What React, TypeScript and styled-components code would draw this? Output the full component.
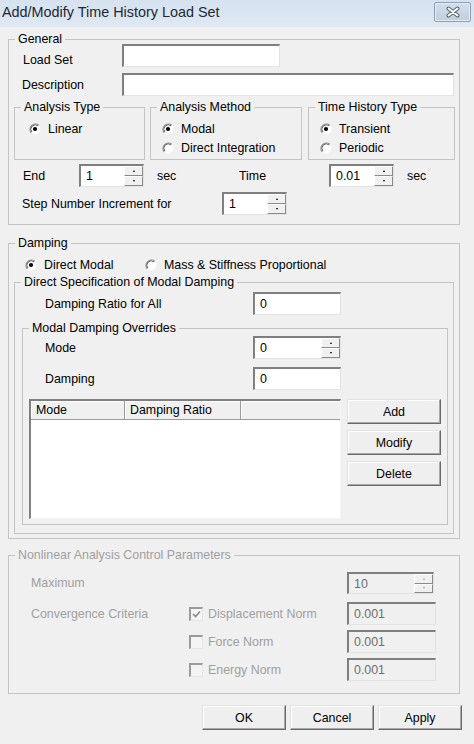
import React from 'react';
import styled, { createGlobalStyle } from 'styled-components';

const GlobalStyle = createGlobalStyle`
  html, body {
    margin: 0;
    padding: 0;
    background: #f0f0f0;
  }
  body {
    font-family: 'Liberation Sans', Arial, sans-serif;
    font-size: 12.4px;
    color: #000;
  }
`;

const Dialog = styled.div`
  width: 474px;
  height: 744px;
  display: flex;
  flex-direction: column;
  background: #f0f0f0;
  overflow: hidden;
`;

const TitleBar = styled.div`
  height: 27px;
  flex: none;
  display: flex;
  align-items: flex-start;
  justify-content: space-between;
  padding: 0 3px 0 2px;
  background: linear-gradient(#d6e2ef, #dfe8f3);
`;

const Title = styled.div`
  margin-top: 4px;
  font-size: 14.4px;
  line-height: 17px;
  color: #1e2833;
`;

const CloseButton = styled.div`
  width: 37px;
  height: 20px;
  margin-top: 2px;
  box-sizing: border-box;
  display: flex;
  align-items: center;
  justify-content: center;
  border: 1px solid #8e9fb5;
  border-radius: 2px;
  background: linear-gradient(#d3deea, #c1cede);
  box-shadow: inset 0 0 0 1px #e4ebf3;
`;

const Body = styled.div`
  display: flex;
  flex-direction: column;
  padding: 0 14px 0 8px;
`;

const Group = styled.div<{ $mt?: number; $ml?: number; $w?: number; $h: number }>`
  position: relative;
  flex: none;
  box-sizing: border-box;
  display: flex;
  flex-direction: column;
  margin-top: ${({ $mt }) => $mt ?? 0}px;
  margin-left: ${({ $ml }) => $ml ?? 0}px;
  width: ${({ $w }) => ($w ? `${$w}px` : 'auto')};
  height: ${({ $h }) => $h}px;
  border: 1px solid #c4c4c4;
`;

const Legend = styled.span<{ $disabled?: boolean }>`
  position: absolute;
  top: -8px;
  left: 6px;
  padding: 0 3px;
  line-height: 15px;
  white-space: nowrap;
  background: #f0f0f0;
  color: ${({ $disabled }) => ($disabled ? '#a0a0a0' : '#000')};
`;

const Row = styled.div<{ $mt?: number; $pl?: number; $align?: string }>`
  flex: none;
  display: flex;
  align-items: ${({ $align }) => $align ?? 'center'};
  margin-top: ${({ $mt }) => $mt ?? 0}px;
  padding-left: ${({ $pl }) => $pl ?? 0}px;
`;

const Label = styled.span<{ $w?: number; $ml?: number; $pt?: number; $disabled?: boolean }>`
  flex: none;
  white-space: nowrap;
  width: ${({ $w }) => ($w ? `${$w}px` : 'auto')};
  margin-left: ${({ $ml }) => $ml ?? 0}px;
  padding-top: ${({ $pt }) => $pt ?? 0}px;
  color: ${({ $disabled }) => ($disabled ? '#a0a0a0' : '#000')};
`;

const TextBox = styled.input<{ $w: number; $h?: number }>`
  flex: none;
  width: ${({ $w }) => $w}px;
  height: ${({ $h }) => $h ?? 23}px;
  box-sizing: border-box;
  margin: 0;
  padding: 0 5px;
  font: inherit;
  color: #000;
  background: #fff;
  outline: none;
  border-style: solid;
  border-width: 2px 1px 1px 2px;
  border-color: #7f7f7f #e3e3e3 #e3e3e3 #7f7f7f;

  &:disabled {
    background: #f0f0f0;
    color: #6e6e6e;
  }
`;

const SpinBox = styled.div<{ $w: number; $h?: number; $disabled?: boolean }>`
  flex: none;
  display: flex;
  width: ${({ $w }) => $w}px;
  height: ${({ $h }) => $h ?? 23}px;
  box-sizing: border-box;
  border-style: solid;
  border-width: 2px 1px 1px 2px;
  border-color: #7f7f7f #e3e3e3 #e3e3e3 #7f7f7f;
  background: ${({ $disabled }) => ($disabled ? '#f0f0f0' : '#fff')};
`;

const SpinInput = styled.input`
  flex: 1;
  min-width: 0;
  margin: 0;
  padding: 0 5px;
  border: 0;
  outline: none;
  font: inherit;
  color: #000;
  background: transparent;

  &:disabled {
    color: #6e6e6e;
  }
`;

const SpinButtons = styled.div`
  flex: none;
  width: 19px;
  display: flex;
  flex-direction: column;
`;

const SpinButton = styled.div<{ $down?: boolean; $disabled?: boolean }>`
  flex: 1;
  display: flex;
  align-items: center;
  justify-content: center;
  box-sizing: border-box;
  background: #f0f0f0;
  border-style: solid;
  border-width: 1px;
  border-color: #fff #8a8a8a #8a8a8a #fff;

  &::after {
    content: '';
    width: 0;
    height: 0;
    border-left: 1.5px solid transparent;
    border-right: 1.5px solid transparent;
    ${({ $down, $disabled }) =>
      $down
        ? `border-top: 2px solid ${$disabled ? '#a0a0a0' : '#000'};`
        : `border-bottom: 2px solid ${$disabled ? '#a0a0a0' : '#000'};`}
  }
`;

const RadioList = styled.div<{ $pl: number }>`
  display: flex;
  flex-direction: column;
  padding: 11px 0 0 ${({ $pl }) => $pl}px;
`;

const RadioItem = styled.label<{ $w?: number }>`
  flex: none;
  display: flex;
  align-items: center;
  gap: 7px;
  height: 19px;
  white-space: nowrap;
  width: ${({ $w }) => ($w ? `${$w}px` : 'auto')};
`;

const CheckBox = styled.span`
  flex: none;
  width: 14px;
  height: 14px;
  box-sizing: border-box;
  display: flex;
  align-items: center;
  justify-content: center;
  background: #f4f4f4;
  border-style: solid;
  border-width: 2px 1px 1px 2px;
  border-color: #9a9a9a #e6e6e6 #e6e6e6 #9a9a9a;
`;

const ListView = styled.div`
  flex: none;
  width: 312px;
  height: 120px;
  box-sizing: border-box;
  background: #fff;
  border-style: solid;
  border-width: 2px 1px 1px 2px;
  border-color: #7f7f7f #f4f4f4 #f4f4f4 #7f7f7f;
`;

const ListHeader = styled.div`
  display: flex;
  height: 19px;
  box-sizing: border-box;
  background: #f0f0f0;
  border-bottom: 1px solid #9a9a9a;
`;

const HeaderCell = styled.div<{ $w?: number }>`
  flex: ${({ $w }) => ($w ? 'none' : '1')};
  width: ${({ $w }) => ($w ? `${$w}px` : 'auto')};
  box-sizing: border-box;
  padding-left: 5px;
  line-height: 18px;
  border-right: ${({ $w }) => ($w ? '1px solid #9a9a9a' : '0')};
  box-shadow: inset 1px 1px 0 #fff;
`;

const ButtonColumn = styled.div`
  flex: none;
  display: flex;
  flex-direction: column;
  gap: 6px;
  margin-left: 6px;
`;

const Button = styled.button<{ $w: number }>`
  width: ${({ $w }) => $w}px;
  height: 25px;
  box-sizing: border-box;
  margin: 0;
  padding: 0;
  font: inherit;
  color: #000;
  background: #efefef;
  border: 1px solid;
  border-color: #e2e2e2 #6a6a6a #6a6a6a #e2e2e2;
  box-shadow: inset -1px -1px 0 #a8a8a8, inset 1px 1px 0 #fff;
`;

const Footer = styled.div`
  display: flex;
  justify-content: flex-end;
  gap: 4px;
  margin: 11px -2px 0 0;
`;

const Radio: React.FC<{ checked?: boolean }> = ({ checked }) => (
  <svg width="12" height="12" viewBox="0 0 12 12">
    <circle cx="6" cy="6" r="5.4" fill="#fff" />
    <path d="M2.2 9.8 A5.4 5.4 0 0 1 9.8 2.2" fill="none" stroke="#8a8a8a" strokeWidth="1.1" />
    <path d="M2.9 9.1 A4.4 4.4 0 0 1 9.1 2.9" fill="none" stroke="#505050" strokeWidth="0.9" />
    {checked && <circle cx="6" cy="6" r="2.1" fill="#000" />}
  </svg>
);

const Check: React.FC<{ checked?: boolean }> = ({ checked }) => (
  <CheckBox>
    {checked && (
      <svg width="9" height="8" viewBox="0 0 9 8">
        <path d="M1 4 L3.5 6.5 L8 1.5" fill="none" stroke="#8a8a8a" strokeWidth="1.6" />
      </svg>
    )}
  </CheckBox>
);

const Spin: React.FC<{ w: number; h?: number; value: string; disabled?: boolean }> = ({ w, h, value, disabled }) => (
  <SpinBox $w={w} $h={h} $disabled={disabled}>
    <SpinInput readOnly disabled={disabled} defaultValue={value} />
    <SpinButtons>
      <SpinButton $disabled={disabled} />
      <SpinButton $down $disabled={disabled} />
    </SpinButtons>
  </SpinBox>
);

export default function App() {
  return (
    <Dialog>
      <GlobalStyle />
      <TitleBar>
        <Title>Add/Modify Time History Load Set</Title>
        <CloseButton>
          <svg width="16" height="12" viewBox="0 0 16 12">
            <path d="M3.5 2.5 L12.5 9.5 M12.5 2.5 L3.5 9.5" stroke="#56606e" strokeWidth="4" strokeLinecap="round" />
            <path d="M3.5 2.5 L12.5 9.5 M12.5 2.5 L3.5 9.5" stroke="#fff" strokeWidth="2" strokeLinecap="round" />
          </svg>
        </CloseButton>
      </TitleBar>

      <Body>
        <Group $mt={12} $h={186}>
          <Legend>General</Legend>
          <Row $mt={4} $pl={14}>
            <Label $w={99} $pt={9}>Load Set</Label>
            <TextBox $w={158} readOnly />
          </Row>
          <Row $mt={6} $pl={13}>
            <Label $w={100}>Description</Label>
            <TextBox $w={332} readOnly />
          </Row>
          <Row $mt={11} $pl={5} $align="flex-start">
            <Group $w={131} $h={53}>
              <Legend>Analysis Type</Legend>
              <RadioList $pl={14}>
                <RadioItem><Radio checked />Linear</RadioItem>
              </RadioList>
            </Group>
            <Group $ml={5} $w={152} $h={53}>
              <Legend>Analysis Method</Legend>
              <RadioList $pl={11}>
                <RadioItem><Radio checked />Modal</RadioItem>
                <RadioItem><Radio />Direct Integration</RadioItem>
              </RadioList>
            </Group>
            <Group $ml={6} $w={147} $h={53}>
              <Legend>Time History Type</Legend>
              <RadioList $pl={11}>
                <RadioItem><Radio checked />Transient</RadioItem>
                <RadioItem><Radio />Periodic</RadioItem>
              </RadioList>
            </Group>
          </Row>
          <Row $mt={4} $pl={14}>
            <Label $w={56}>End</Label>
            <Spin w={65} value="1" />
            <Label $ml={13} $w={82}>sec</Label>
            <Label $w={90}>Time</Label>
            <Spin w={65} value="0.01" />
            <Label $ml={13}>sec</Label>
          </Row>
          <Row $mt={5} $pl={13}>
            <Label $w={200}>Step Number Increment for</Label>
            <Spin w={65} value="1" />
          </Row>
        </Group>

        <Group $mt={18} $h={296}>
          <Legend>Damping</Legend>
          <Row $mt={11} $pl={16}>
            <RadioItem $w={120}><Radio checked />Direct Modal</RadioItem>
            <RadioItem><Radio />Mass &amp; Stiffness Proportional</RadioItem>
          </Row>
          <Group $mt={8} $ml={5} $w={440} $h={252}>
            <Legend>Direct Specification of Modal Damping</Legend>
            <Row $mt={9} $pl={30}>
              <Label $w={208}>Damping Ratio for All</Label>
              <TextBox $w={88} readOnly defaultValue="0" />
            </Row>
            <Group $mt={13} $ml={7} $w={426} $h={197}>
              <Legend>Modal Damping Overrides</Legend>
              <Row $mt={7} $pl={22}>
                <Label $w={208}>Mode</Label>
                <Spin w={88} value="0" />
              </Row>
              <Row $mt={8} $pl={22}>
                <Label $w={208}>Damping</Label>
                <TextBox $w={88} readOnly defaultValue="0" />
              </Row>
              <Row $mt={9} $pl={6} $align="flex-start">
                <ListView>
                  <ListHeader>
                    <HeaderCell $w={94}>Mode</HeaderCell>
                    <HeaderCell $w={116}>Damping Ratio</HeaderCell>
                    <HeaderCell />
                  </ListHeader>
                </ListView>
                <ButtonColumn>
                  <Button $w={94}>Add</Button>
                  <Button $w={94}>Modify</Button>
                  <Button $w={94}>Delete</Button>
                </ButtonColumn>
              </Row>
            </Group>
          </Group>
        </Group>

        <Group $mt={16} $h={139}>
          <Legend $disabled>Nonlinear Analysis Control Parameters</Legend>
          <Row $mt={16} $pl={22}>
            <Label $w={316} $disabled>Maximum</Label>
            <Spin w={87} h={22} value="10" disabled />
          </Row>
          <Row $mt={8} $pl={22}>
            <Label $w={158} $disabled>Convergence Criteria</Label>
            <Check checked />
            <Label $ml={5} $w={139} $disabled>Displacement Norm</Label>
            <TextBox $w={89} disabled defaultValue="0.001" />
          </Row>
          <Row $mt={5} $pl={180}>
            <Check />
            <Label $ml={5} $w={139} $disabled>Force Norm</Label>
            <TextBox $w={89} disabled defaultValue="0.001" />
          </Row>
          <Row $mt={5} $pl={180}>
            <Check />
            <Label $ml={5} $w={139} $disabled>Energy Norm</Label>
            <TextBox $w={89} disabled defaultValue="0.001" />
          </Row>
        </Group>

        <Footer>
          <Button $w={84}>OK</Button>
          <Button $w={84}>Cancel</Button>
          <Button $w={84}>Apply</Button>
        </Footer>
      </Body>
    </Dialog>
  );
}
